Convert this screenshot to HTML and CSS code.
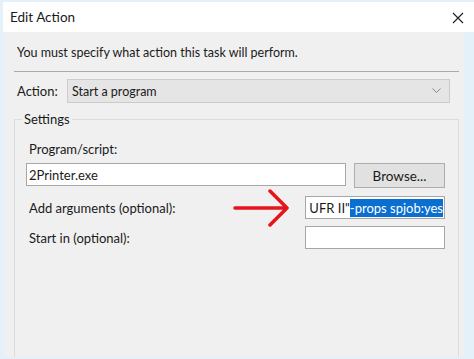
FILE: index.html
```html
<!DOCTYPE html>
<html lang="en">
<head>
    <meta charset="UTF-8">
    <meta name="viewport" content="width=device-width, initial-scale=1.0">
    <title>Edit Action</title>
    <link rel="stylesheet" href="styles.css">
</head>
<body>
    <div class="window">
        <div class="titlebar">
            <span class="title">Edit Action</span>
            <svg class="close" width="12" height="12" viewBox="0 0 12 12">
                <path d="M1 1 L11 11 M11 1 L1 11" stroke="#222" stroke-width="1.2" fill="none"/>
            </svg>
        </div>

        <div class="content">
            <p class="intro">You must specify what action this task will perform.</p>
            <div class="separator"></div>

            <div class="action-row">
                <span class="label">Action:</span>
                <div class="combo">
                    <span>Start a program</span>
                    <svg width="9" height="6" viewBox="0 0 9 6">
                        <path d="M0.5 0.5 L4.5 4.5 L8.5 0.5" stroke="#888" stroke-width="1" fill="none"/>
                    </svg>
                </div>
            </div>

            <fieldset class="group">
                <legend>Settings</legend>

                <div class="field-label">Program/script:</div>
                <div class="program-row">
                    <div class="textbox wide">2Printer.exe</div>
                    <button class="browse">Browse...</button>
                </div>

                <div class="arg-row">
                    <span class="label">Add arguments (optional):</span>
                    <svg class="arrow" width="58" height="38" viewBox="0 0 58 38">
                        <path d="M2 19 L54 19 M37 2 L54 19 L37 36" stroke="#e8141c" stroke-width="3.5" fill="none" stroke-linecap="round" stroke-linejoin="round"/>
                    </svg>
                    <div class="textbox short scroll">
                        <span>; UFR II"</span><span class="selected"> -props spjob:yes</span>
                    </div>
                </div>

                <div class="arg-row">
                    <span class="label">Start in (optional):</span>
                    <div class="textbox short"></div>
                </div>
            </fieldset>
        </div>
    </div>
</body>
</html>
```

FILE: styles.css
```css
* {
    box-sizing: border-box;
}
body {
    margin: 0;
    background: #e4f1f9;
    font-family: Lato, "Open Sans", sans-serif;
    font-size: 13px;
    color: #1a1a1a;
    height: 359px;
    overflow: hidden;
}
.window {
    margin: 2px 0 0 3px;
    height: 355px;
    display: flex;
    flex-direction: column;
}
.titlebar {
    flex: none;
    height: 30px;
    background: #ffffff;
    display: flex;
    align-items: center;
    justify-content: space-between;
    padding: 0 10px 0 7px;
}
.title {
    font-size: 13.5px;
}
.close {
    margin-top: 1px;
}
.content {
    flex: 1;
    min-height: 0;
    overflow: hidden;
    margin: 0 10px 0 1px;
    background: #f0f0f0;
    padding: 11px 5px 0 10px;
}
.intro {
    margin: 0 0 0 3px;
    line-height: 20px;
    font-size: 12.5px;
}
.separator {
    height: 1px;
    background: #a9a9a9;
    margin: 8px 0 7px 0;
}
.action-row {
    display: flex;
    align-items: center;
    padding: 0 9px 0 3px;
}
.action-row .label {
    width: 50px;
}
.combo {
    flex: 1;
    height: 24px;
    background: #e5e5e5;
    border: 1px solid #cccccc;
    display: flex;
    align-items: center;
    justify-content: space-between;
    padding: 0 8px 0 4px;
    font-size: 12.5px;
}
.group {
    margin: 7px 0 0 0;
    border: 1px solid #dcdcdc;
    border-bottom: none;
    padding: 0 13px 0 11px;
    height: 260px;
}
.group legend {
    padding: 0 2px;
    margin-left: -4px;
    line-height: 18px;
}
.field-label {
    margin: 12px 0 0 3px;
    line-height: 18px;
}
.program-row {
    display: flex;
    align-items: flex-start;
    gap: 8px;
    margin-top: 5px;
}
.textbox {
    height: 23px;
    background: #ffffff;
    border: 1px solid #a6a6a6;
    display: flex;
    align-items: center;
    padding: 0 2px;
    white-space: nowrap;
    overflow: hidden;
}
.textbox.wide {
    flex: 1;
}
.browse {
    width: 91px;
    height: 25px;
    background: #e1e1e1;
    border: 1px solid #adadad;
    font-family: inherit;
    font-size: 13.5px;
    color: #1a1a1a;
    padding: 0;
}
.arg-row {
    display: flex;
    align-items: center;
    margin-top: 7px;
    padding-left: 3px;
}
.program-row + .arg-row {
    margin-top: 8px;
}
.arg-row .label {
    flex: 1;
}
.arrow {
    margin: -8px 14px -8px 0;
}
.textbox.short {
    width: 140px;
    flex: none;
}
.textbox.scroll {
    justify-content: flex-end;
    padding-right: 1px;
}
.selected {
    background: #0a6fd0;
    color: #ffffff;
    line-height: 18px;
}
```
